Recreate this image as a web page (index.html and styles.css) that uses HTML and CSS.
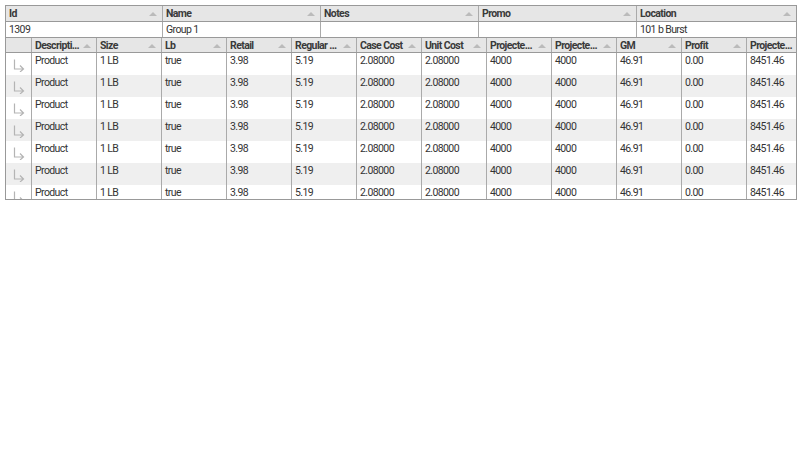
FILE: index.html
```html
<!DOCTYPE html>
<html>
<head>
<meta charset="utf-8">
<link rel="stylesheet" href="styles.css">
</head>
<body>
<div class="table">
  <div class="row head top">
    <div class="hc"><span class="t">Id</span><span class="sort"></span></div>
    <div class="hc"><span class="t">Name</span><span class="sort"></span></div>
    <div class="hc"><span class="t">Notes</span><span class="sort"></span></div>
    <div class="hc"><span class="t">Promo</span><span class="sort"></span></div>
    <div class="hc"><span class="t">Location</span><span class="sort"></span></div>
  </div>
  <div class="row top data">
    <div class="c">1309</div>
    <div class="c">Group 1</div>
    <div class="c"></div>
    <div class="c"></div>
    <div class="c">101 b Burst</div>
  </div>
  <div class="sub">
    <div class="row head subgrid">
      <div class="hc icol"></div>
      <div class="hc"><span class="t">Description</span><span class="sort"></span></div>
      <div class="hc"><span class="t">Size</span><span class="sort"></span></div>
      <div class="hc"><span class="t">Lb</span><span class="sort"></span></div>
      <div class="hc"><span class="t">Retail</span><span class="sort"></span></div>
      <div class="hc"><span class="t">Regular Retail</span><span class="sort"></span></div>
      <div class="hc"><span class="t">Case Cost</span><span class="sort"></span></div>
      <div class="hc"><span class="t">Unit Cost</span><span class="sort"></span></div>
      <div class="hc"><span class="t">Projected Units</span><span class="sort"></span></div>
      <div class="hc"><span class="t">Projected Cases</span><span class="sort"></span></div>
      <div class="hc"><span class="t">GM</span><span class="sort"></span></div>
      <div class="hc"><span class="t">Profit</span><span class="sort"></span></div>
      <div class="hc"><span class="t">Projected Sales</span><span class="sort"></span></div>
    </div>
    <div id="rows"></div>
  </div>
</div>
<script src="app.js"></script>
</body>
</html>
```
FILE: app.js
```js
var vals = ["Product","1 LB","true","3.98","5.19","2.08000","2.08000","4000","4000","46.91","0.00","8451.46"];
var icon = '<svg width="12" height="13" viewBox="0 0 12 13"><path d="M1.5 0.5 V10 H10.5 M7 6.5 L10.5 10 L7 13" fill="none" stroke="#b4b4b4" stroke-width="1.2"/></svg>';
var html = "";
for (var i = 0; i < 7; i++) {
  html += '<div class="row subgrid body' + (i % 2 ? ' alt' : '') + '"><div class="c icol">' + icon + '</div>';
  for (var j = 0; j < vals.length; j++) html += '<div class="c">' + vals[j] + '</div>';
  html += '</div>';
}
document.getElementById("rows").innerHTML = html;
```
FILE: styles.css
```css
html, body { margin: 0; padding: 0; background: #fff; }
body { font-family: Roboto, "Liberation Sans", sans-serif; font-size: 10.5px; letter-spacing: -0.6px; color: #333; }
.table {
  margin: 5px;
  width: 790px;
  height: 193px;
  border: 1px solid #999;
  overflow: hidden;
  background: #fff;
}
.row { display: grid; }
.top { grid-template-columns: 157px 158px 158px 158px 1fr; }
.head { background: #e6e6e6; border-bottom: 1px solid #999; }
.hc {
  display: flex;
  align-items: center;
  height: 15px;
  padding: 0 5px 0 3px;
  border-right: 1px solid #aaa;
  font-weight: 700;
  min-width: 0;
  color: #3a3a3a;
}
.hc:last-child { border-right: none; }
.hc .t { flex: 1; min-width: 0; overflow: hidden; white-space: nowrap; text-overflow: ellipsis; }
.sort {
  flex: none;
  width: 0; height: 0;
  margin-left: 3px;
  border-left: 4px solid transparent;
  border-right: 4px solid transparent;
  border-bottom: 4px solid #bbb;
}
.data { border-bottom: 1px solid #999; }
.data .c { height: 15px; line-height: 15px; }
.c {
  padding: 0 3px;
  border-right: 1px solid #aaa;
  white-space: nowrap;
  overflow: hidden;
  min-width: 0;
}
.top .c:last-child { border-right: none; }
.sub { width: 790px; overflow: hidden; }
.subgrid { grid-template-columns: 26px repeat(12, 65px); width: 806px; }
.subgrid .hc { height: 13px; padding-top: 1px; }
.icol { padding: 0; }
.body .c { height: 22px; line-height: 16px; box-sizing: border-box; }
.body .icol { display: flex; align-items: flex-start; justify-content: center; padding-top: 6px; }
.alt { background: #efefef; }
```
